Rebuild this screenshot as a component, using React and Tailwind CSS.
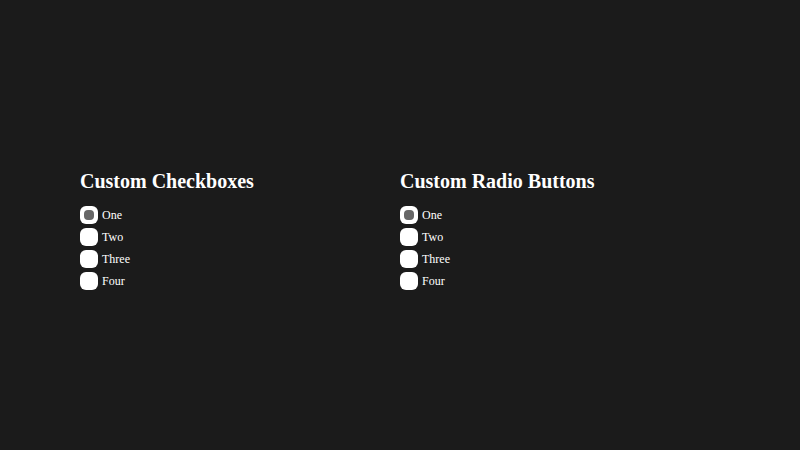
import React, { useState } from "react";

const options = ["One", "Two", "Three", "Four"];

const Box = ({ checked }) => (
  <span className="flex h-[18px] w-[18px] shrink-0 items-center justify-center rounded-[6px] bg-white">
    {checked && <span className="h-[10px] w-[10px] rounded-[4px] bg-[#666666]" />}
  </span>
);

const CheckboxGroup = () => {
  const [checked, setChecked] = useState({ One: true });

  return (
    <div className="flex flex-col gap-[4px]">
      {options.map((opt) => (
        <label
          key={opt}
          className="flex h-[18px] cursor-pointer items-center gap-[4px] text-[12px] leading-[14px]"
          onClick={() => setChecked((c) => ({ ...c, [opt]: !c[opt] }))}
        >
          <Box checked={!!checked[opt]} />
          <span>{opt}</span>
        </label>
      ))}
    </div>
  );
};

const RadioGroup = () => {
  const [selected, setSelected] = useState("One");

  return (
    <div className="flex flex-col gap-[4px]">
      {options.map((opt) => (
        <label
          key={opt}
          className="flex h-[18px] cursor-pointer items-center gap-[4px] text-[12px] leading-[14px]"
          onClick={() => setSelected(opt)}
        >
          <Box checked={selected === opt} />
          <span>{opt}</span>
        </label>
      ))}
    </div>
  );
};

export default function App() {
  return (
    <div
      className="flex h-[450px] w-full items-center bg-[#1b1b1b] pt-[8px] text-white"
      style={{ fontFamily: '"Liberation Serif", "Times New Roman", serif' }}
    >
      <div className="grid w-full grid-cols-2 px-[80px]">
        <section>
          <h2 className="mb-[12px] text-[20px] font-bold leading-[26px]">Custom Checkboxes</h2>
          <CheckboxGroup />
        </section>
        <section>
          <h2 className="mb-[12px] text-[20px] font-bold leading-[26px]">Custom Radio Buttons</h2>
          <RadioGroup />
        </section>
      </div>
    </div>
  );
}
